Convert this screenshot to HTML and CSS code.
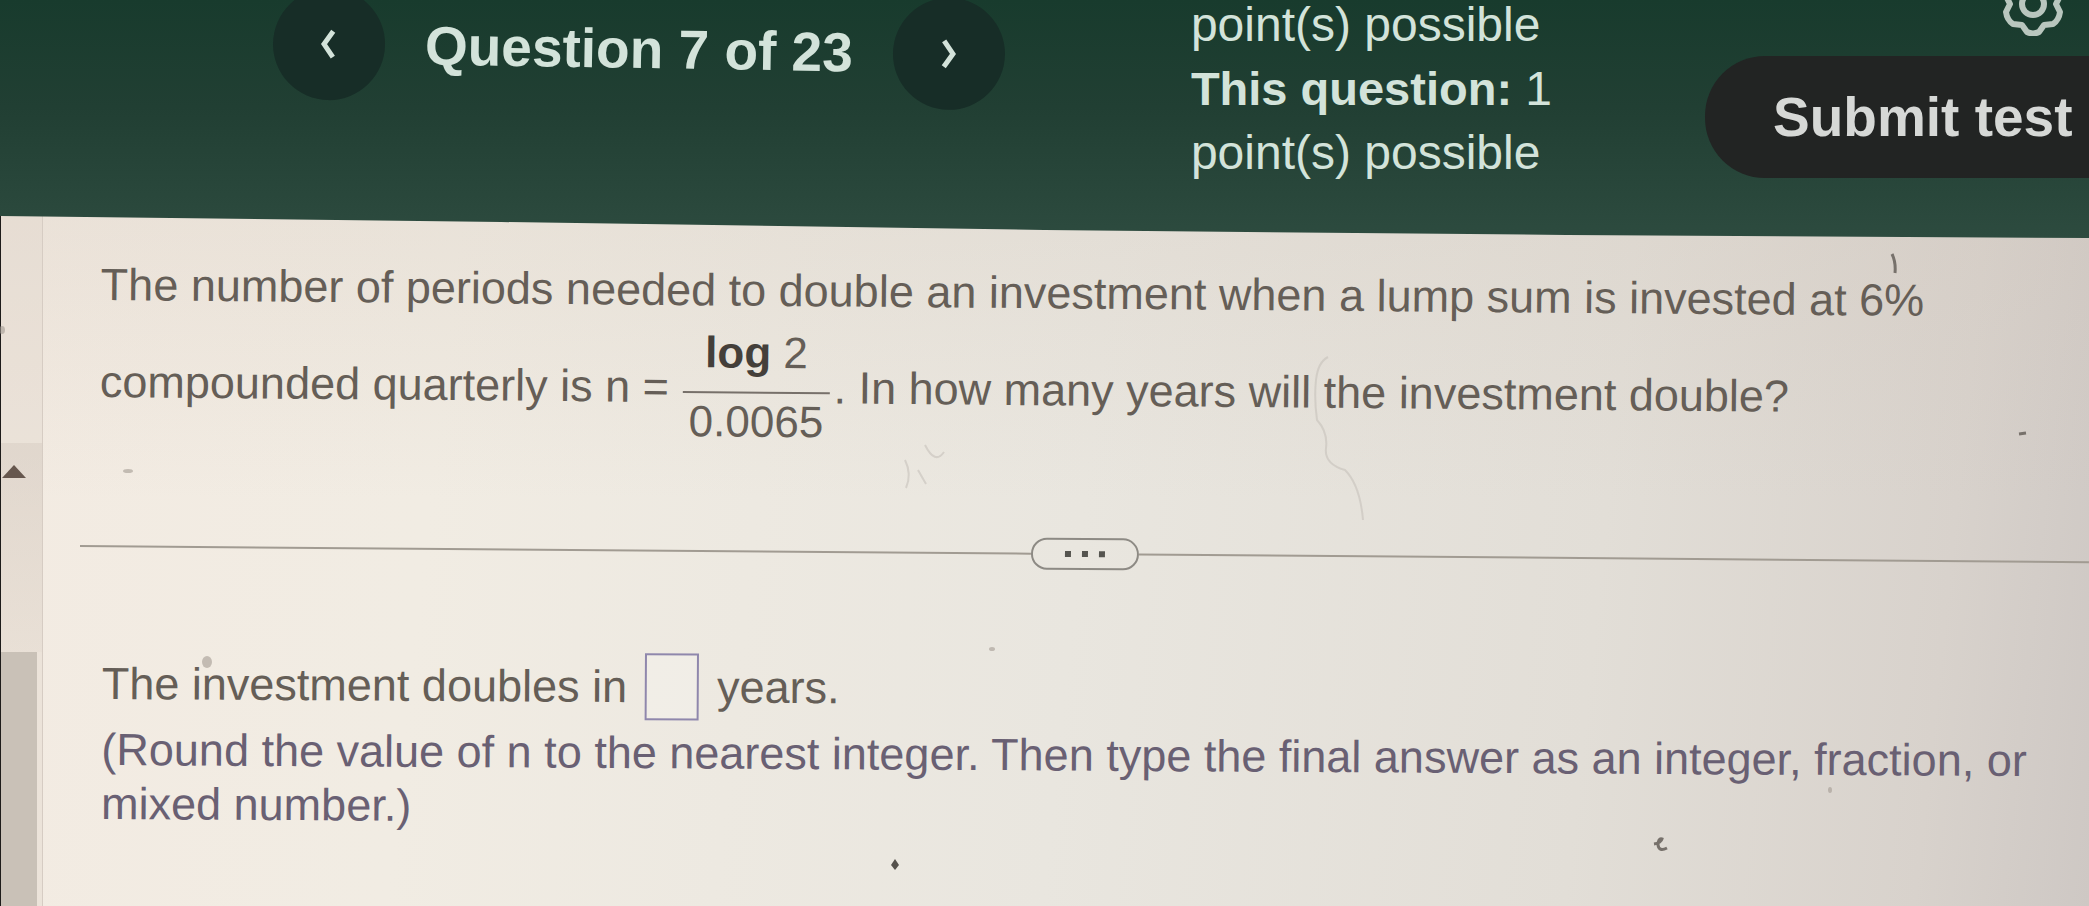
FILE: index.html
```html
<!DOCTYPE html>
<html lang="en">
<head>
<meta charset="utf-8">
<title>Question 7 of 23</title>
<link rel="stylesheet" href="styles.css">
</head>
<body>
<header class="topbar">
  <div class="topbar-row">
    <nav class="pager" aria-label="Questions">
      <button class="round" type="button" aria-label="Previous question">
        <svg width="20" height="32" viewBox="0 0 20 32"><path d="M14 3 L5 16 L14 29"/></svg>
      </button>
      <h1 class="pager-title">Question 7 of 23</h1>
      <button class="round" type="button" aria-label="Next question">
        <svg width="20" height="32" viewBox="0 0 20 32"><path d="M5 3 L14 16 L5 29"/></svg>
      </button>
    </nav>
    <div class="points">
      <div>point(s) possible</div>
      <div><strong>This question:</strong> 1</div>
      <div>point(s) possible</div>
    </div>
    <div class="actions">
      <button class="gear" type="button" aria-label="Settings">
        <svg width="64" height="64" viewBox="-32 -32 64 64">
          <path d="M6 28 Q0 31 -6 28 L-11 21 L-20 20 Q-26 16 -27 8 L-23 0 L-27 -8 Q-26 -16 -20 -20 L-11 -21 L-6 -28 Q0 -31 6 -28 L11 -21 L20 -20 Q26 -16 27 -8 L23 0 L27 8 Q26 16 20 20 L11 21 Z"/>
          <circle r="11"/>
        </svg>
      </button>
      <button class="submit" type="button">Submit test</button>
    </div>
  </div>
</header>

<main class="page">
  <aside class="rail">
    <div class="rail-top"></div>
    <div class="rail-track">
      <svg class="rail-arrow" width="24" height="13" viewBox="0 0 24 13"><path d="M0 13 L12 0 L24 13 Z"/></svg>
    </div>
    <div class="rail-thumb"></div>
  </aside>
  <section class="content">
    <div class="question">
      <p class="line">The number of periods needed to double an investment when a lump sum is invested at 6%</p>
      <div class="line equation">
        <span>compounded quarterly is n =</span>
        <span class="fraction">
          <span class="numerator"><b>log</b> 2</span>
          <span class="denominator">0.0065</span>
        </span>
        <span>. In how many years will the investment double?</span>
      </div>
    </div>
    <div class="divider">
      <span class="rule"></span>
      <button class="more" type="button" aria-label="More"><i></i><i></i><i></i></button>
      <span class="rule"></span>
    </div>
    <form class="answer">
      <div class="answer-row">
        <label for="years">The investment doubles in</label>
        <input id="years" class="answer-box" type="text" autocomplete="off">
        <span>years.</span>
      </div>
      <p class="hint">(Round the value of n to the nearest integer. Then type the final answer as an integer, fraction, or<br>mixed number.)</p>
    </form>
  </section>
</main>

<svg class="specks" viewBox="0 0 2089 906" preserveAspectRatio="none" aria-hidden="true">
  <path class="dark" d="M1892 254 Q1896 262 1895 273"/>
  <path class="dark" d="M2019 434 L2026 433"/>
  <path class="dark" d="M1654 844 Q1661 843 1662 839 Q1658 838 1658 845 Q1659 852 1667 848"/>
  <path class="fill" d="M895 859 L899 865 L895 870 L891 865 Z"/>
  <ellipse class="soft" cx="207" cy="662" rx="5" ry="6"/>
  <ellipse class="soft" cx="992" cy="649" rx="3" ry="2"/>
  <ellipse class="soft" cx="1830" cy="790" rx="2" ry="3"/>
  <ellipse class="soft" cx="128" cy="471" rx="5" ry="2"/>
  <ellipse class="soft" cx="2" cy="330" rx="3" ry="4"/>
  <path class="crease" d="M1328 357 Q1318 362 1316 380 T1317 420 Q1328 432 1326 448 T1345 470 Q1360 485 1363 520"/>
  <path class="crease" d="M905 460 Q912 474 906 488 M925 445 Q935 465 944 452 M918 470 L926 484"/>
</svg>
</body>
</html>
```
FILE: styles.css
```css
* {
  box-sizing: border-box;
}

body {
  margin: 0;
  min-height: 100vh;
  display: flex;
  flex-direction: column;
  overflow: hidden;
  position: relative;
  font-family: "Liberation Sans", Arial, sans-serif;
  color: #655e57;
  background:
    linear-gradient(180deg, rgba(205, 192, 180, 0.22) 24%, rgba(205, 192, 180, 0) 55%),
    linear-gradient(96deg, #f3ebe2 0%, #f1ece3 22%, #e9e6df 52%, #e2ded7 76%, #d8d2cc 92%, #cec8c4 100%);
}

button {
  font: inherit;
  border: 0;
  padding: 0;
  cursor: pointer;
}

p,
h1 {
  margin: 0;
}

.topbar {
  height: 238px;
  position: relative;
  z-index: 1;
  overflow: hidden;
  color: #d3e3da;
  background: linear-gradient(180deg, #183b2d 0%, #213f33 45%, #2d4b3f 100%);
  clip-path: polygon(0 0, 100% 0, 100% 100%, 75% 235px, 50% 230px, 24% 222px, 0 216px);
}

.topbar-row {
  display: flex;
  align-items: flex-start;
  margin-top: -7px;
  padding-left: 273px;
}

.pager {
  display: flex;
  align-items: center;
  gap: 40px;
  transform: rotate(0.9deg);
}

.pager-title {
  font-size: 55px;
  line-height: 64px;
  font-weight: bold;
  white-space: nowrap;
}

.round {
  width: 112px;
  height: 112px;
  border-radius: 50%;
  background: #172d27;
  display: flex;
  align-items: center;
  justify-content: center;
}

.round path {
  fill: none;
  stroke: #d3e3da;
  stroke-width: 5;
}

.points {
  margin-left: 186px;
  font-size: 48px;
  line-height: 64px;
  white-space: nowrap;
}

.points strong {
  font-size: 47px;
}

.actions {
  margin-left: auto;
  width: 384px;
  margin-top: -21px;
  display: flex;
  flex-direction: column;
  gap: 20px;
}

.gear {
  align-self: flex-end;
  margin-right: 24px;
  width: 64px;
  height: 64px;
  background: none;
}

.gear svg {
  display: block;
  fill: none;
  stroke: #b9c6be;
  stroke-width: 6;
  stroke-linejoin: round;
}

.submit {
  height: 122px;
  padding-left: 68px;
  border-radius: 60px 0 0 60px;
  background: #222423;
  color: #d6d8d6;
  font-size: 55px;
  font-weight: bold;
  text-align: left;
  white-space: nowrap;
}

.page {
  flex: 1;
  display: flex;
  margin-top: -22px;
  border-left: 1px solid #1d1b1a;
}

.rail {
  width: 42px;
  flex: none;
  display: flex;
  flex-direction: column;
  border-right: 1px solid #d6ccc3;
  background: rgba(226, 214, 205, 0.4);
}

.rail-top {
  height: 227px;
}

.rail-track {
  height: 209px;
  padding: 22px 1px;
  background: linear-gradient(180deg, rgba(205, 194, 184, 0.35), rgba(205, 194, 184, 0.1));
}

.rail-arrow {
  display: block;
  fill: #66574e;
}

.rail-thumb {
  flex: 1;
  width: 36px;
  background: #c9c1b7;
}

.content {
  flex: 1;
  min-width: 0;
  padding: 41px 0 0 58px;
}

.question {
  transform: rotate(0.5deg);
  transform-origin: left top;
  display: flex;
  flex-direction: column;
  gap: 6px;
}

.line {
  font-size: 45px;
  line-height: 56px;
  white-space: nowrap;
}

.equation {
  display: flex;
  align-items: center;
}

.fraction {
  margin: 0 4px 0 14px;
  display: flex;
  flex-direction: column;
  align-items: stretch;
  text-align: center;
  font-size: 44px;
}

.numerator {
  padding-bottom: 11px;
  border-bottom: 2px solid #77706a;
}

.numerator b {
  color: #443f3a;
}

.denominator {
  padding: 0 6px;
}

.divider {
  margin: 86px 0 88px -21px;
  display: flex;
  align-items: center;
  transform: rotate(0.46deg);
  transform-origin: left center;
}

.rule {
  flex: 1;
  height: 2px;
  background: #a19b92;
}

.more {
  width: 108px;
  height: 32px;
  border: 2px solid #8d8a84;
  border-radius: 16px;
  background: transparent;
  display: flex;
  align-items: center;
  justify-content: center;
  gap: 11px;
}

.more i {
  width: 6px;
  height: 6px;
  background: #55544f;
}

.answer {
  margin-left: 1px;
  transform: rotate(0.33deg);
  transform-origin: left top;
  display: flex;
  flex-direction: column;
  gap: 6px;
}

.answer-row {
  display: flex;
  align-items: center;
  gap: 18px;
  font-size: 45px;
}

.answer-box {
  width: 54px;
  height: 67px;
  padding: 0 4px;
  border: 2px solid #8f87ac;
  background: rgba(255, 255, 255, 0.2);
  font: inherit;
  color: inherit;
}

.hint {
  font-size: 45px;
  line-height: 54px;
  white-space: nowrap;
  color: #696073;
}

.specks {
  position: absolute;
  inset: 0;
  width: 100%;
  height: 100%;
  z-index: 2;
  pointer-events: none;
  fill: none;
}

.dark {
  stroke: #77716b;
  stroke-width: 3;
}

.fill {
  fill: #55514c;
}

.soft {
  fill: #a39b93;
  opacity: 0.6;
}

.crease {
  stroke: #c6c2ba;
  stroke-width: 2;
  opacity: 0.6;
}
```
